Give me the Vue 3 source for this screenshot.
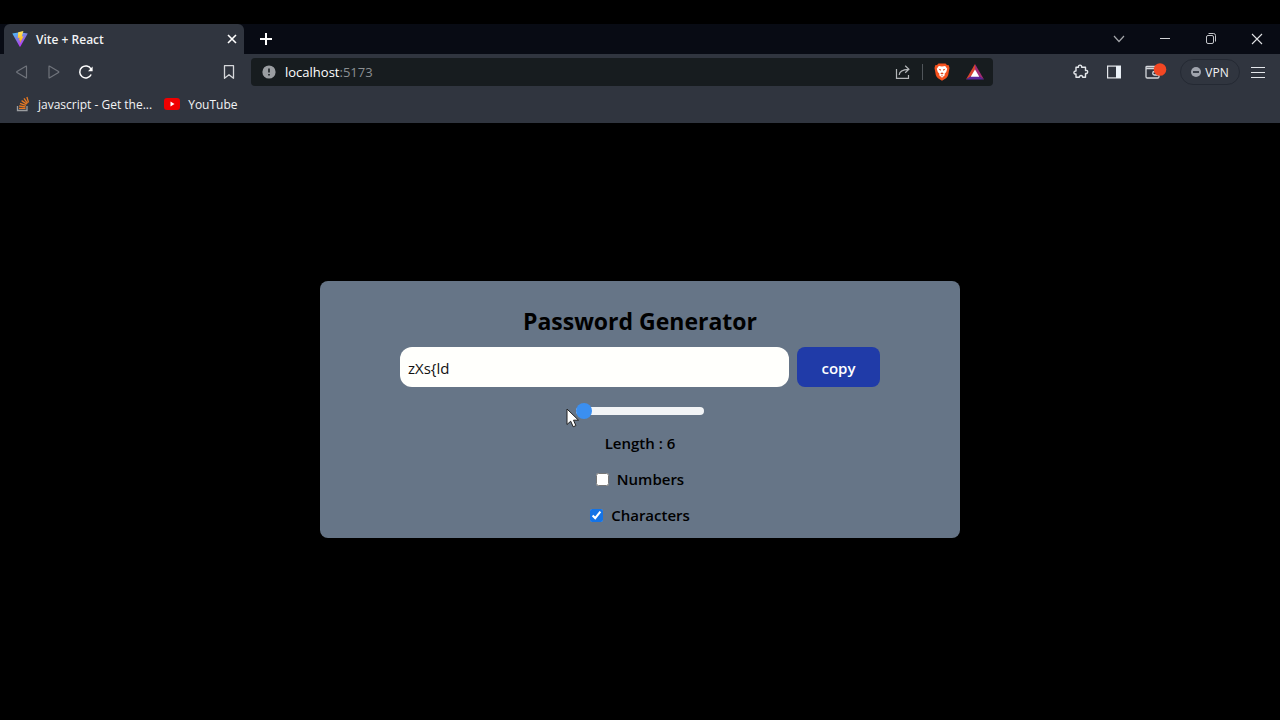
<template>
    <div class="browser">
        <header class="chrome">
            <div class="tab-strip">
                <div class="tab">
                    <svg class="icon" width="16" height="16" viewBox="0 0 16 16">
                        <defs>
                            <linearGradient id="viteBody" x1="0" y1="0" x2="0.5" y2="1">
                                <stop offset="0" stop-color="#41c6ff" />
                                <stop offset="0.5" stop-color="#7f7de0" />
                                <stop offset="1" stop-color="#bd34fe" />
                            </linearGradient>
                            <linearGradient id="viteBolt" x1="0" y1="0" x2="0" y2="1">
                                <stop offset="0" stop-color="#ffe562" />
                                <stop offset="1" stop-color="#ffa800" />
                            </linearGradient>
                        </defs>
                        <path d="M0.3 2.4 8 1.2 15.7 2.4 8.4 15.4Q8 16 7.6 15.4Z" fill="url(#viteBody)" />
                        <path d="M11.4 0.1 6.2 1.2 5.8 7 7.6 6.7 7 9.5 8.4 9.1 7.8 12.4 11.6 5.3 9.8 5.6Z" fill="url(#viteBolt)" />
                    </svg>
                    <span class="tab-title">Vite + React</span>
                    <button class="icon-button" aria-label="Close tab">
                        <svg width="10" height="10" viewBox="0 0 10 10"><path d="M1 1 9 9M9 1 1 9" stroke="#fff" stroke-width="1.6" /></svg>
                    </button>
                </div>
                <button class="icon-button new-tab" aria-label="New tab">
                    <svg width="12" height="12" viewBox="0 0 12 12"><path d="M6 0V12M0 6H12" stroke="#fff" stroke-width="2" /></svg>
                </button>
                <div class="window-controls">
                    <button class="icon-button" aria-label="Search tabs">
                        <svg width="12" height="12" viewBox="0 0 12 12"><path d="M1 3 6 8.5 11 3" fill="none" stroke="#a4a6aa" stroke-width="1.2" /></svg>
                    </button>
                    <button class="icon-button" aria-label="Minimize">
                        <svg width="12" height="12" viewBox="0 0 12 12"><path d="M1 5.5H11" stroke="#d0d2d5" /></svg>
                    </button>
                    <button class="icon-button" aria-label="Restore">
                        <svg width="12" height="12" viewBox="0 0 12 12"><g fill="none" stroke="#c4c6ca"><rect x="1.5" y="2.5" width="7" height="8" rx="1.5" /><path d="M3.5 0.500H8.500Q10.500 0.500 10.500 2.500V8.500" /></g></svg>
                    </button>
                    <button class="icon-button" aria-label="Close window">
                        <svg width="12" height="12" viewBox="0 0 12 12"><path d="M1 1 11 11M11 1 1 11" stroke="#e0e2e5" stroke-width="1.1" /></svg>
                    </button>
                </div>
            </div>

            <div class="toolbar">
                <div class="nav">
                    <button class="icon-button" aria-label="Back">
                        <svg width="16" height="16" viewBox="0 0 16 16"><path d="M12.5 2.5V13.5Q12.5 14.3 11.8 13.8L3 8.6Q2.3 8 3 7.4L11.8 2.2Q12.5 1.8 12.5 2.5Z" fill="none" stroke="#6f737b" stroke-width="1.2" /></svg>
                    </button>
                    <button class="icon-button" aria-label="Forward">
                        <svg width="16" height="16" viewBox="0 0 16 16"><path d="M3 2.5V13.5Q3 14.3 3.7 13.8L12.5 8.6Q13.2 8 12.5 7.4L3.7 2.2Q3 1.8 3 2.5Z" fill="none" stroke="#6f737b" stroke-width="1.2" /></svg>
                    </button>
                    <button class="icon-button" aria-label="Reload">
                        <svg width="16" height="16" viewBox="0 0 16 16"><path d="M13 5A6 6 0 1 0 13.2 10.5" fill="none" stroke="#fff" stroke-width="1.5" /><path d="M14.6 2.6V7.2H10Z" fill="#fff" /></svg>
                    </button>
                </div>
                <button class="icon-button bookmark" aria-label="Bookmark this page">
                    <svg width="16" height="16" viewBox="0 0 16 16"><path d="M3.5 1.7H12.5V14.3L8 10.7 3.5 14.3Z" fill="none" stroke="#d5d7da" stroke-width="1.3" stroke-linejoin="round" /></svg>
                </button>
                <div class="address-bar">
                    <svg width="14" height="14" viewBox="0 0 14 14"><circle cx="7" cy="7" r="6.6" fill="#9b9ea2" /><path d="M7 3.4V7.6M7 9V10.6" stroke="#1b2023" stroke-width="1.6" /></svg>
                    <a class="url" href="#">localhost<span class="port">:5173</span></a>
                    <button class="icon-button" aria-label="Share">
                        <svg width="16" height="16" viewBox="0 0 16 16"><g fill="none" stroke="#b4b6b9" stroke-width="1.2"><path d="M1.5 5V14.4H13.5V11" /><path d="M4.2 11Q4.5 5.5 13.5 5.3M10.2 1.8 13.9 5.3 10.2 8.8" /></g></svg>
                    </button>
                    <span class="divider"></span>
                    <button class="icon-button shields" aria-label="Brave Shields">
                        <svg width="16" height="18" viewBox="0 0 16 18">
                            <path d="M4.5 0.5H11.5L13 2.1 14.8 2.2 15.5 5 14.2 12Q13.6 14 12 15.2L8 17.8 4 15.2Q2.4 14 1.8 12L0.5 5 1.2 2.2 3 2.1Z" fill="#f4511e" />
                            <path d="M4.8 3 8 3.6 11.2 3 13.2 5.8 12.2 9 10.4 10.9 11 12.1 8 14.8 5 12.1 5.6 10.9 3.8 9 2.8 5.8Z" fill="#fff" />
                            <path d="M4.5 5.8 6.9 6.3 6.5 7.9ZM11.5 5.8 9.1 6.3 9.5 7.9ZM6.2 10.3 8 11.5 9.8 10.3 8 9.5ZM6.8 12.6H9.2L8 13.4Z" fill="#d84315" />
                        </svg>
                    </button>
                    <button class="icon-button" aria-label="Brave Rewards">
                        <svg width="18" height="16" viewBox="0 0 18 16"><path d="M9 0 0 15.5 9 10Z" fill="#d9442f" /><path d="M9 0 18 15.5 9 10Z" fill="#a12b75" /><path d="M0 15.5H18L9 9.5Z" fill="#5d279d" /><path d="M9 5.5 4.7 12.7H13.3Z" fill="#fff" /></svg>
                    </button>
                </div>
                <div class="actions">
                    <button class="icon-button" aria-label="Extensions">
                        <svg width="16" height="16" viewBox="0 0 16 16"><path d="M3 3.3H5.5C4.7 0.4 9.3 0.4 8.7 3.3H12.5V6.5C15.3 5.6 15.5 10 12.5 9.5V13.3H9.7C9.7 10.8 6.3 10.8 6.3 13.3H3V10C0.2 10.5 0.2 6.7 3 7Z" fill="none" stroke="#e4e7eb" stroke-width="1.4" stroke-linejoin="round" /></svg>
                    </button>
                    <button class="icon-button" aria-label="Sidebar">
                        <svg width="16" height="16" viewBox="0 0 16 16"><rect x="1.6" y="2.1" width="12.8" height="11.8" fill="none" stroke="#e4e7eb" stroke-width="1.2" /><path d="M10 2H14.5V14H10Z" fill="#edf3fa" /></svg>
                    </button>
                    <button class="icon-button wallet" aria-label="Wallet">
                        <svg width="24" height="20" viewBox="0 0 24 20"><path d="M3 6.5V14.7Q3 16 4.3 16H14.7Q16 16 16 14.7V6.5H3V5.3Q3 4.5 4 4.5H15" fill="none" stroke="#d5d8dc" stroke-width="1.3" /><path d="M16 9.5H11.5Q9.7 9.5 9.7 11.2T11.5 13H16" fill="none" stroke="#d5d8dc" stroke-width="1.3" /><circle cx="17" cy="7.5" r="6.3" fill="#f34723" /></svg>
                    </button>
                    <button class="vpn">
                        <svg width="10" height="10" viewBox="0 0 10 10"><circle cx="5" cy="5" r="5" fill="#a0a4ad" /><path d="M2 5H8" stroke="#30353f" stroke-width="1.8" /></svg>
                        VPN
                    </button>
                    <button class="icon-button" aria-label="Menu">
                        <svg width="14" height="12" viewBox="0 0 14 12"><path d="M0 1.5H14M0 6.5H14M0 11.5H14" stroke="#e4e7eb" stroke-width="1" /></svg>
                    </button>
                </div>
            </div>

            <nav class="bookmarks">
                <a class="bookmark-link" href="#">
                    <svg width="14" height="16" viewBox="0 0 14 16"><path d="M1.5 10V14.5H11V10" fill="none" stroke="#9a9da0" stroke-width="1.3" /><path d="M3 12.4H9.5M3.2 10 9.5 10.9M4 7.3 9.9 9.4M5.6 4.6 10.7 8.1M8 2.4 11.5 7.3M10.9 1 12.5 6.5" stroke="#e87922" stroke-width="1.3" /></svg>
                    javascript - Get the...
                </a>
                <a class="bookmark-link" href="#">
                    <svg width="16" height="12" viewBox="0 0 16 12"><rect width="16" height="12" rx="3" fill="#f00000" /><path d="M6.5 3.5 10.5 6 6.5 8.5Z" fill="#fff" /></svg>
                    YouTube
                </a>
            </nav>
        </header>

        <main class="page">
            <section class="card">
                <h1 class="title">Password Generator</h1>
                <div class="password-row">
                    <input v-model="password" class="password" type="text" aria-label="Password" readonly>
                    <button class="copy" @click="copyPassword">copy</button>
                </div>
                <div class="slider-row">
                    <input id="length" v-model.number="length" class="slider" type="range" min="6" max="100" @input="generate">
                    <svg class="cursor" width="14" height="20" viewBox="0 0 14 20"><path d="M1 1V16.5L4.7 13.2 7.2 18.8 9.9 17.6 7.5 12.2H12.5Z" fill="#fff" stroke="#222" stroke-width="1" /></svg>
                </div>
                <label class="option" for="length">Length : {{ length }}</label>
                <div class="option">
                    <input id="numbers" v-model="numbers" class="checkbox" type="checkbox" @change="generate">
                    <label for="numbers">Numbers</label>
                </div>
                <div class="option">
                    <input id="characters" v-model="characters" class="checkbox" type="checkbox" @change="generate">
                    <label for="characters">Characters</label>
                </div>
            </section>
        </main>
    </div>
</template>

<script setup>
import { ref } from 'vue'

const password = ref('zXs{ld')
const length = ref(6)
const numbers = ref(false)
const characters = ref(true)

function generate() {
    let str = 'ABCDEFGHIJKLMNOPQRSTUVWXYZabcdefghijklmnopqrstuvwxyz'
    if (numbers.value) str += '0123456789'
    if (characters.value) str += '!@#$%^&*-_+=[]{}~`'

    let pass = ''
    for (let i = 0; i < length.value; i++) {
        pass += str.charAt(Math.floor(Math.random() * str.length))
    }
    password.value = pass
}

function copyPassword() {
    navigator.clipboard.writeText(password.value)
}
</script>

<style>
body{
    margin: 0;
    background-color: #000;
}
</style>

<style scoped>
.browser{
    min-height: 100vh;
    box-sizing: border-box;
    padding-top: 24px;
    background-color: #000;
    font-family: "Open Sans", "Noto Sans", sans-serif;
    color: #000;
}

svg{
    display: block;
    flex-shrink: 0;
}

button,
input{
    font-family: inherit;
    margin: 0;
}

.icon-button{
    display: flex;
    align-items: center;
    justify-content: center;
    padding: 0;
    border: none;
    background: none;
}

.chrome{
    background-color: #30353f;
    color: #f2f3f5;
    font-size: 12px;
}

.tab-strip{
    display: flex;
    align-items: center;
    height: 30px;
    padding-left: 4px;
    background-color: #080b14;
}

.tab{
    display: flex;
    align-items: center;
    gap: 8px;
    box-sizing: border-box;
    width: 240px;
    height: 30px;
    padding: 0 7px 0 8px;
    border-radius: 6px 6px 0 0;
    background-color: #30353f;
}

.tab-title{
    flex: 1;
    font-weight: 600;
}

.new-tab{
    margin-left: 16px;
}

.window-controls{
    display: flex;
    gap: 34px;
    margin-left: auto;
    padding-right: 17px;
}

.toolbar{
    display: flex;
    align-items: center;
    height: 36px;
    padding: 0 15px 0 14px;
}

.nav{
    display: flex;
    gap: 16px;
}

.bookmark{
    margin-left: 127px;
}

.address-bar{
    display: flex;
    flex: 1;
    align-items: center;
    box-sizing: border-box;
    height: 28px;
    margin-left: 14px;
    padding: 0 9px 0 11px;
    border-radius: 4px;
    background-color: #171c1f;
}

.url{
    flex: 1;
    margin-left: 9px;
    font-size: 13px;
    color: #fff;
    text-decoration: none;
}

.port{
    color: #8b8f92;
}

.divider{
    width: 1px;
    height: 16px;
    margin: 0 11px;
    background-color: #50555a;
}

.shields{
    margin-right: 16px;
}

.actions{
    display: flex;
    align-items: center;
    margin-left: 80px;
    gap: 17px;
}

.wallet{
    margin: 0 -4px 0 4px;
}

.vpn{
    display: flex;
    align-items: center;
    justify-content: center;
    gap: 4px;
    width: 60px;
    height: 26px;
    padding: 0;
    border: 1px solid #242933;
    border-radius: 13px;
    background: none;
    color: #f2f3f5;
    font-size: 12px;
}

.vpn + .icon-button{
    margin-left: -6px;
}

.bookmarks{
    display: flex;
    align-items: center;
    gap: 12px;
    height: 33px;
    padding: 0 16px 5px;
    box-sizing: border-box;
}

.bookmark-link{
    display: flex;
    align-items: center;
    gap: 8px;
    color: #f2f3f5;
    text-decoration: none;
}

.page{
    display: flex;
    justify-content: center;
    padding-top: 158px;
}

.card{
    display: flex;
    flex-direction: column;
    align-items: center;
    box-sizing: border-box;
    width: 50%;
    padding: 24px 80px 11px;
    border-radius: 8px;
    background-color: #667587;
    font-size: 15px;
    font-weight: 600;
    line-height: 24px;
}

.title{
    margin: 0 0 10px;
    font-size: 23px;
    font-weight: 700;
    line-height: 32px;
}

.password-row{
    display: flex;
    gap: 8px;
    width: 100%;
}

.password{
    flex: 1;
    min-width: 0;
    box-sizing: border-box;
    height: 40px;
    padding: 2px 8px 0;
    border: none;
    border-radius: 12px;
    background-color: #fffffc;
    color: #111;
    font-size: 15px;
}

.copy{
    width: 83px;
    height: 40px;
    padding: 2px 0 0;
    border: none;
    border-radius: 8px;
    background-color: #203ba8;
    color: #fff;
    font-size: 15px;
    font-weight: 600;
}

.slider-row{
    position: relative;
    display: flex;
    align-items: center;
    width: 128px;
    height: 16px;
    margin: 16px 0 12px;
}

.slider{
    width: 100%;
    height: 16px;
    background: none;
    appearance: none;
}

.slider::-webkit-slider-runnable-track{
    height: 8px;
    border-radius: 4px;
    background-color: #f2f4f6;
}

.slider::-webkit-slider-thumb{
    width: 16px;
    height: 16px;
    margin-top: -4px;
    border-radius: 50%;
    background-color: #3b8ff0;
    appearance: none;
}

.cursor{
    position: absolute;
    top: 5px;
    left: -10px;
}

.option{
    display: flex;
    align-items: center;
    gap: 8px;
    margin-bottom: 12px;
}

.option:last-child{
    margin-bottom: 0;
}

.checkbox{
    width: 13px;
    height: 13px;
    accent-color: #1473e6;
}
</style>
